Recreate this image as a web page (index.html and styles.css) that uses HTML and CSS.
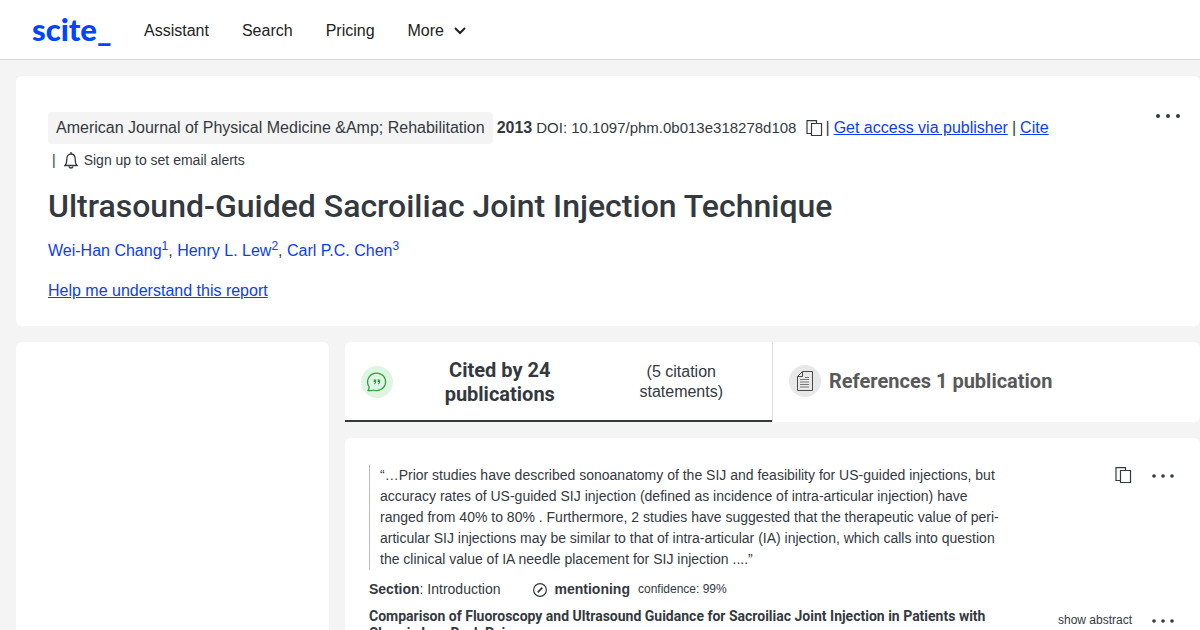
FILE: index.html
```html
<!DOCTYPE html>
<html lang="en">
<head>
  <meta charset="UTF-8" />
  <meta name="viewport" content="width=device-width, initial-scale=1.0" />
  <title>Ultrasound-Guided Sacroiliac Joint Injection Technique - scite</title>
  <link rel="stylesheet" href="styles.css">
</head>
<body>
  <header class="header">
    <a href="#" class="logo">scite_</a>
    <nav class="nav">
      <a href="#">Assistant</a>
      <a href="#">Search</a>
      <a href="#">Pricing</a>
      <button type="button" class="more">More
        <svg width="12" height="8" viewBox="0 0 12 8" fill="none" stroke="currentColor" stroke-width="2"><path d="M1 1l5 5 5-5"/></svg>
      </button>
    </nav>
  </header>

  <main class="page">
    <section class="card paper">
      <div class="paper-head">
        <div class="meta">
          <span class="journal">American Journal of Physical Medicine &amp;Amp; Rehabilitation</span>
          <strong class="year">2013</strong>
          <span class="doi">DOI: 10.1097/phm.0b013e318278d108</span>
          <button type="button" class="icon-btn copy-doi" aria-label="Copy DOI">
            <svg width="17" height="17" viewBox="0 0 17 17" fill="none" stroke="currentColor" stroke-width="1.200"><path d="M5 13.500H1V.6h9.500V3"/><path d="M5.500 3.500h10v12h-10z"/></svg>
          </button>
          <span>|</span>
          <a href="#" class="link publisher">Get access via publisher</a>
          <span class="bar">|</span>
          <a href="#" class="link">Cite</a>
        </div>
        <button type="button" class="icon-btn" aria-label="Paper options">
          <svg width="24" height="4" viewBox="0 0 24 4" fill="currentColor"><circle cx="2" cy="2" r="2"/><circle cx="12" cy="2" r="2"/><circle cx="22" cy="2" r="2"/></svg>
        </button>
      </div>
      <div class="alerts">
        <span>|</span>
        <button type="button" class="alert-btn">
          <svg width="14" height="17" viewBox="0 0 14 17" fill="none" stroke="currentColor" stroke-width="1.300"><path d="M1 13.500c1.500-1.500 1.800-2.500 1.800-6.500C2.800 4 4.500 2 7 2s4.200 2 4.200 5c0 4 .3 5 1.800 6.500z"/><path d="M7 0v2M5 14.500c.5 2 3.500 2 4 0"/></svg>
          Sign up to set email alerts
        </button>
      </div>
      <h1>Ultrasound-Guided Sacroiliac Joint Injection Technique</h1>
      <p class="authors"><a href="#">Wei-Han Chang<sup>1</sup></a>, <a href="#">Henry L. Lew<sup>2</sup></a>, <a href="#">Carl P.C. Chen<sup>3</sup></a></p>
      <a href="#" class="link">Help me understand this report</a>
    </section>

    <div class="columns">
      <aside class="card sidebar"></aside>
      <div class="content">
        <div class="card tabs">
          <button type="button" class="tab tab-active">
            <svg width="32" height="32" viewBox="0 0 32 32" fill="none"><circle cx="16" cy="16" r="16" fill="#dff5e1"/><path d="M7 24.500c1.200-1.300 1.300-2.400 1-4A9 8.700 0 1 1 12.500 24c-1.800.8-3.500.8-5.500.5z" stroke="#2f9e44" stroke-width="1.300" stroke-linejoin="round"/><path d="M12.700 13.500h2.500v2c0 1.500-.8 2.500-2 3v-1c.6-.4.9-.9.9-1.500h-1.400zM16.700 13.500h2.500v2c0 1.500-.8 2.500-2 3v-1c.6-.4.9-.9.9-1.500h-1.400z" fill="#2f9e44"/></svg>
            <span class="tab-title">Cited by 24 publications</span>
            <span class="tab-note">(5 citation statements)</span>
          </button>
          <button type="button" class="tab tab-refs">
            <svg width="32" height="32" viewBox="0 0 32 32" fill="none"><circle cx="16" cy="16" r="16" fill="#e8e8e8"/><path d="M13.500 6.500h10v19h-15v-14zM13.500 6.500v5h-5" stroke="#4a4a4a"/><path d="M16 12.500h4M11 14.500h9M11 17h9M11 19.500h9M11 22h9" stroke="#777"/></svg>
            <span class="tab-title">References 1 publication</span>
          </button>
        </div>

        <article class="card citation">
          <div class="row">
            <blockquote>“…Prior studies have described sonoanatomy of the SIJ and feasibility for US-guided injections, but accuracy rates of US-guided SIJ injection (defined as incidence of intra-articular injection) have ranged from 40% to 80% . Furthermore, 2 studies have suggested that the therapeutic value of peri-articular SIJ injections may be similar to that of intra-articular (IA) injection, which calls into question the clinical value of IA needle placement for SIJ injection ....”</blockquote>
            <div class="actions">
              <button type="button" class="icon-btn" aria-label="Copy citation">
                <svg width="17" height="17" viewBox="0 0 17 17" fill="none" stroke="currentColor" stroke-width="1.200"><path d="M5 13.500H1V.6h9.500V3"/><path d="M5.500 3.500h10v12h-10z"/></svg>
              </button>
              <button type="button" class="icon-btn" aria-label="Citation options">
                <svg width="22" height="4" viewBox="0 0 22 4" fill="currentColor"><circle cx="2" cy="2" r="1.800"/><circle cx="11" cy="2" r="1.800"/><circle cx="20" cy="2" r="1.800"/></svg>
              </button>
            </div>
          </div>
          <div class="details">
            <span class="section"><strong>Section</strong>: Introduction</span>
            <svg width="14" height="14" viewBox="0 0 14 14" fill="none" stroke="currentColor"><circle cx="7" cy="7" r="6.400" stroke-width="1.200"/><path d="M4.700 9.300l4.600-4.600" stroke-width="1.700"/></svg>
            <strong>mentioning</strong>
            <span class="confidence">confidence: 99%</span>
          </div>
          <div class="row">
            <h2>Comparison of Fluoroscopy and Ultrasound Guidance for Sacroiliac Joint Injection in Patients with Chronic Low Back Pain</h2>
            <div class="actions">
              <button type="button" class="icon-btn abstract">show abstract</button>
              <button type="button" class="icon-btn" aria-label="Source options">
                <svg width="22" height="4" viewBox="0 0 22 4" fill="currentColor"><circle cx="2" cy="2" r="1.800"/><circle cx="11" cy="2" r="1.800"/><circle cx="20" cy="2" r="1.800"/></svg>
              </button>
            </div>
          </div>
        </article>
      </div>
    </div>
  </main>
</body>
</html>
```
FILE: styles.css
```css
* {
  box-sizing: border-box;
}

body {
  margin: 0;
  height: 100vh;
  overflow: hidden;
  background: #f4f4f4;
  color: #33393f;
  font-family: "Liberation Sans", Arial, sans-serif;
  font-size: 16px;
  line-height: 24px;
}

button {
  padding: 0;
  border: none;
  background: none;
  color: inherit;
  font: inherit;
  cursor: pointer;
}

svg {
  display: block;
  flex: none;
}

a {
  color: #0c3df4;
  text-decoration: none;
}

.link {
  text-decoration: underline;
}

.header {
  display: flex;
  align-items: center;
  height: 60px;
  padding: 0 32px;
  background: #fff;
  border-bottom: 1px solid #d8d8d8;
}

.logo {
  width: 80px;
  margin-right: 32px;
  padding-bottom: 2px;
  color: #0044ff;
  font-family: Lato, sans-serif;
  font-size: 31px;
  font-weight: 900;
}

.nav {
  display: flex;
  gap: 33px;
  padding-top: 2px;
}

.nav a,
.more {
  color: #222;
}

.more {
  display: flex;
  align-items: center;
  gap: 10px;
}

.page {
  padding: 16px 0 0 16px;
}

.card {
  background: #fff;
  border-radius: 6px;
}

.paper {
  padding: 36px 16px 24px 32px;
}

.paper-head {
  display: flex;
  justify-content: space-between;
  align-items: flex-start;
}

.icon-btn {
  padding: 2px 4px;
}

.meta {
  display: flex;
  align-items: center;
  white-space: nowrap;
}

.journal {
  padding: 4px 8px;
  background: #f4f4f4;
  border-radius: 4px;
}

.year {
  margin: 0 4px;
}

.doi {
  font-size: 15px;
}

.copy-doi {
  padding: 0 2px 0 10px;
}

.publisher {
  margin-left: 4px;
}

.bar {
  margin: 0 4px;
}

.alerts {
  display: flex;
  align-items: center;
  gap: 8px;
  padding: 4px;
  font-size: 14px;
}

.alert-btn {
  display: flex;
  align-items: center;
  gap: 6px;
}

h1,
h2,
.tab-title {
  font-family: Roboto, sans-serif;
}

h1 {
  margin: 10px 0 13px;
  font-size: 32px;
  font-weight: 500;
  line-height: 40px;
}

.authors {
  margin: 0 0 16px;
}

sup {
  font-size: 12px;
  line-height: 0;
}

.columns {
  display: grid;
  grid-template-columns: 313px 1fr;
  gap: 16px;
  margin-top: 16px;
}

.paper {
  padding-bottom: 23px;
}

.sidebar {
  min-height: 300px;
}

.tabs {
  display: flex;
  height: 80px;
  margin-bottom: 16px;
}

.tab {
  display: flex;
  flex: 1;
  align-items: center;
  padding: 0 16px;
}

.tab-title {
  font-size: 20px;
  font-weight: bold;
}

.tab-active {
  padding-top: 2px;
  border-bottom: 2px solid #33393f;
}

.tab-active .tab-title {
  width: 164px;
  margin: 0 auto;
}

.tab-note {
  width: 100px;
  margin: 0 auto;
  line-height: 20px;
}

.tab-refs {
  gap: 8px;
  padding-bottom: 2px;
  border-left: 1px solid #ddd;
  color: #595959;
}

.citation {
  padding: 27px 22px 27px 24px;
  font-size: 14px;
  line-height: 21px;
}

.row {
  display: flex;
  justify-content: space-between;
  align-items: flex-start;
}

blockquote {
  max-width: 632px;
  margin: 0;
  padding-left: 10px;
  border-left: 1px solid #bbb;
}

.actions {
  display: flex;
  align-items: center;
  gap: 12px;
}

.details {
  display: flex;
  align-items: center;
  gap: 8px;
  margin: 9px 0 8px;
}

.section {
  margin-right: 24px;
}

.confidence,
.abstract {
  font-size: 12px;
}

h2 {
  max-width: 632px;
  margin: 0;
  font-size: 14px;
  line-height: 17px;
}
```
